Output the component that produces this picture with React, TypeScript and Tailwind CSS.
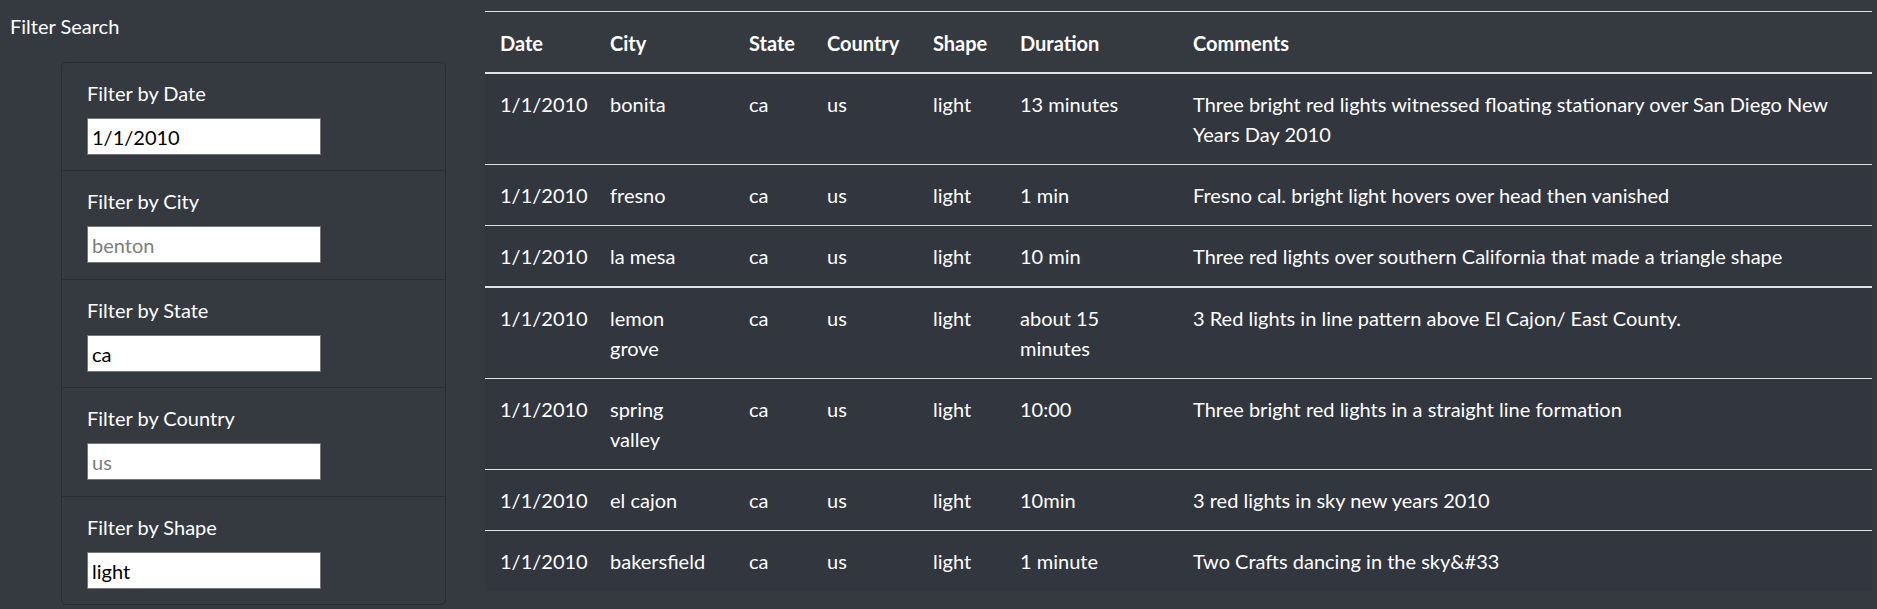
const filters = [
  { label: "Filter by Date", value: "1/1/2010", placeholder: "1/1/2010" },
  { label: "Filter by City", value: "", placeholder: "benton" },
  { label: "Filter by State", value: "ca", placeholder: "ca" },
  { label: "Filter by Country", value: "", placeholder: "us" },
  { label: "Filter by Shape", value: "light", placeholder: "circle" },
];

const sightings = [
  ["1/1/2010", "bonita", "ca", "us", "light", "13 minutes", "Three bright red lights witnessed floating stationary over San Diego New Years Day 2010"],
  ["1/1/2010", "fresno", "ca", "us", "light", "1 min", "Fresno cal. bright light hovers over head then vanished"],
  ["1/1/2010", "la mesa", "ca", "us", "light", "10 min", "Three red lights over southern California that made a triangle shape"],
  ["1/1/2010", "lemon grove", "ca", "us", "light", "about 15 minutes", "3 Red lights in line pattern above El Cajon/ East County."],
  ["1/1/2010", "spring valley", "ca", "us", "light", "10:00", "Three bright red lights in a straight line formation"],
  ["1/1/2010", "el cajon", "ca", "us", "light", "10min", "3 red lights in sky new years 2010"],
  ["1/1/2010", "bakersfield", "ca", "us", "light", "1 minute", "Two Crafts dancing in the sky&#33"],
];

const headers = ["Date", "City", "State", "Country", "Shape", "Duration", "Comments"];
const widths = ["w-[110px]", "w-[139px]", "w-[78px]", "w-[106px]", "w-[87px]", "w-[173px]", ""];

function FilterPanel() {
  return (
    <aside className="w-[485px] shrink-0">
      <div className="pl-[10px] pt-[11px] leading-[30px]">Filter Search</div>
      <ul className="ml-[61px] mt-[21px] w-[385px] rounded-[5px] border border-black/20">
        {filters.map((f, i) => (
          <li
            key={f.label}
            className={`px-[25px] pt-[15px] ${i % 2 === 1 ? "pb-[16px]" : "pb-[15px]"} ${i > 0 ? "border-t border-black/20" : ""}`}
          >
            <label className="block leading-[30px] mb-[10px]">{f.label}</label>
            <input
              type="text"
              defaultValue={f.value}
              placeholder={f.placeholder}
              className="block w-[234px] h-[37px] bg-white border border-[#767676] px-[4px] text-[20px] text-black placeholder:text-[#7d7d7d] outline-none"
            />
          </li>
        ))}
      </ul>
    </aside>
  );
}

function SightingsTable() {
  return (
    <div className="flex-1 pt-[11px] pr-[5px]">
      <table className="w-full table-fixed border-collapse bg-[#32363e]">
        <colgroup>
          {widths.map((w, i) => (
            <col key={i} className={w} />
          ))}
        </colgroup>
        <thead>
          <tr className="border-t border-[#dee2e6] border-b-2 bg-[#353a41]">
            {headers.map((h) => (
              <th key={h} className="px-[15px] pt-[16px] pb-[14px] text-left font-bold leading-[30px] align-bottom">
                {h}
              </th>
            ))}
          </tr>
        </thead>
        <tbody>
          {sightings.map((row, r) => (
            <tr key={r} className={r < sightings.length - 1 ? (r === 2 ? "border-b-2 border-[#dee2e6]" : "border-b border-[#dee2e6]") : ""}>
              {row.map((cell, c) => (
                <td
                  key={c}
                  className={`py-[15px] pl-[15px] ${c === 1 ? "pr-[30px]" : "pr-[15px]"} align-top leading-[30px] whitespace-normal`}
                >
                  {cell}
                </td>
              ))}
            </tr>
          ))}
        </tbody>
      </table>
    </div>
  );
}

export default function App() {
  return (
    <div className="min-h-screen bg-[#353a41] text-white text-[20px] font-['Lato',sans-serif] flex">
      <FilterPanel />
      <SightingsTable />
    </div>
  );
}
